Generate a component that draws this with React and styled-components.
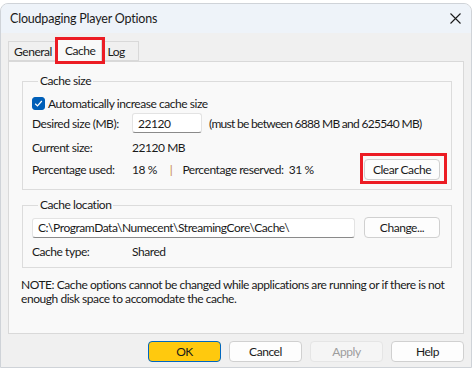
import React, { useState } from "react";
import styled, { createGlobalStyle } from "styled-components";

const GlobalStyle = createGlobalStyle`
  body {
    margin: 0;
    background: #ffffff;
    font-family: Lato, "Noto Sans", sans-serif;
    font-size: 12px;
    letter-spacing: -0.45px;
    color: #1a1a1a;
  }
`;

function App() {
  const [autoGrow, setAutoGrow] = useState(true);
  const [desired, setDesired] = useState("22120");
  const [tab, setTab] = useState("Cache");

  return (
    <>
      <GlobalStyle />
      <Window>
        <TitleBar>
          <Title>Cloudpaging Player Options</Title>
          <CloseIcon width="11" height="11" viewBox="0 0 11 11">
            <path d="M0.5 0.5 L10.5 10.5 M10.5 0.5 L0.5 10.5" stroke="#1a1a1a" strokeWidth="1.1" />
          </CloseIcon>
        </TitleBar>
        <Body>
          <TabStrip>
            {["General", "Cache", "Log"].map((t) => (
              <Tab key={t} $active={tab === t} onClick={() => setTab(t)}>
                {t}
                {t === "Cache" && <Highlight />}
              </Tab>
            ))}
          </TabStrip>
          <Panel>
            <Group>
              <Legend>Cache size</Legend>
              <CheckRow>
                <CheckBox $checked={autoGrow} onClick={() => setAutoGrow(!autoGrow)}>
                  {autoGrow && (
                    <svg width="9" height="9" viewBox="0 0 9 9">
                      <path d="M1.2 4.8 L3.5 7 L7.8 2" fill="none" stroke="#fff" strokeWidth="1.2" />
                    </svg>
                  )}
                </CheckBox>
                Automatically increase cache size
              </CheckRow>
              <FieldRow $top={1}>
                <Label>Desired size (MB):</Label>
                <TextBox $width={70} value={desired} onChange={(e) => setDesired(e.target.value)} />
                <Hint>(must be between 6888 MB and 625540 MB)</Hint>
              </FieldRow>
              <FieldRow $top={5} $height={18}>
                <Label>Current size:</Label>
                <span>22120 MB</span>
              </FieldRow>
              <FieldRow $top={3}>
                <Label>Percentage used:</Label>
                <span>18 %</span>
                <Separator>|</Separator>
                <span>Percentage reserved:&nbsp; 31 %</span>
                <Highlighted>
                  <Button $width={76}>Clear Cache</Button>
                </Highlighted>
              </FieldRow>
            </Group>

            <Group $spaced>
              <Legend>Cache location</Legend>
              <FieldRow $top={0}>
                <TextBox $width={323} readOnly value="C:\ProgramData\Numecent\StreamingCore\Cache\" />
                <Button $width={76} $push>Change...</Button>
              </FieldRow>
              <FieldRow $top={4} $height={18}>
                <Label>Cache type:</Label>
                <span>Shared</span>
              </FieldRow>
            </Group>

            <Note>
              NOTE: Cache options cannot be changed while applications are running or if there is not
              enough disk space to accomodate the cache.
            </Note>
          </Panel>
          <ButtonBar>
            <Button $width={73} $primary>OK</Button>
            <Button $width={73}>Cancel</Button>
            <Button $width={73} disabled>Apply</Button>
            <Button $width={73}>Help</Button>
          </ButtonBar>
        </Body>
      </Window>
    </>
  );
}

export default App;

const Window = styled.div`
  margin-top: 3px;
  width: 470px;
  height: 363px;
  border: 1px solid #cfd3d8;
  border-radius: 8px 8px 0 0;
  background: #f0f0f0;
  overflow: hidden;
  display: flex;
  flex-direction: column;
`;

const TitleBar = styled.div`
  height: 29px;
  background: #eef3f9;
  display: flex;
  align-items: center;
  justify-content: space-between;
  padding: 0 10px 0 9px;
`;

const Title = styled.span`
  font-size: 12.5px;
  letter-spacing: -0.2px;
  color: #1a1a1a;
`;

const CloseIcon = styled.svg`
  display: block;
`;

const Body = styled.div`
  padding: 0 7px 0 7px;
  display: flex;
  flex-direction: column;
`;

const TabStrip = styled.div`
  height: 28px;
  display: flex;
  align-items: flex-end;
`;

const Tab = styled.div`
  position: relative;
  box-sizing: border-box;
  min-width: 38px;
  height: ${(p) => (p.$active ? "25px" : "20px")};
  padding: 0 ${(p) => (p.$active ? "6px 0 7px" : "5px")};
  margin-bottom: ${(p) => (p.$active ? "-1px" : "0")};
  display: flex;
  align-items: center;
  background: ${(p) => (p.$active ? "#f9f9f9" : "#f0f0f0")};
  border: 1px solid #d9d9d9;
  border-bottom: ${(p) => (p.$active ? "none" : "1px solid #d9d9d9")};
  margin-right: -1px;
  z-index: ${(p) => (p.$active ? 2 : 1)};
  cursor: default;
`;

const Highlight = styled.span`
  position: absolute;
  left: -3px;
  right: -4px;
  top: -1px;
  bottom: -2px;
  border: 3px solid #ec1c24;
  pointer-events: none;
`;

const Panel = styled.div`
  height: 260px;
  background: #f9f9f9;
  border: 1px solid #d9d9d9;
  padding: 11px 11px 0 13px;
  display: flex;
  flex-direction: column;
`;

const Group = styled.fieldset`
  margin: ${(p) => (p.$spaced ? "7px" : "0")} 0 0 0;
  padding: 4px 11px ${(p) => (p.$spaced ? "7px" : "9px")} 9px;
  border: 1px solid #dcdcdc;
  min-inline-size: 0;
  display: flex;
  flex-direction: column;
`;

const Legend = styled.legend`
  padding: 0 2px;
  margin-left: 6px;
  line-height: 16px;
`;

const CheckRow = styled.label`
  margin-top: 1px;
  height: 18px;
  display: flex;
  align-items: center;
  gap: 3px;
`;

const CheckBox = styled.span`
  width: 13px;
  height: 13px;
  box-sizing: border-box;
  border-radius: 3px;
  background: ${(p) => (p.$checked ? "#005fb8" : "#ffffff")};
  border: 1px solid ${(p) => (p.$checked ? "#005fb8" : "#8a8a8a")};
  display: flex;
  align-items: center;
  justify-content: center;
`;

const FieldRow = styled.div`
  margin-top: ${(p) => p.$top}px;
  height: ${(p) => (p.$height ? `${p.$height}px` : "auto")};
  display: flex;
  align-items: center;
`;

const Label = styled.span`
  width: 100px;
  flex-shrink: 0;
`;

const TextBox = styled.input`
  width: ${(p) => p.$width}px;
  height: 20px;
  box-sizing: border-box;
  padding: 0 5px;
  font: inherit;
  letter-spacing: inherit;
  color: #1a1a1a;
  background: #ffffff;
  border: 1px solid #e3e3e3;
  border-bottom-color: #8a8a8a;
  border-radius: 3px;
  outline: none;
`;

const Hint = styled.span`
  margin-left: 7px;
  letter-spacing: -0.7px;
`;

const Separator = styled.span`
  color: #c8873a;
  margin: 0 10px 0 13px;
`;

const Highlighted = styled.div`
  position: relative;
  margin-left: auto;
  &::after {
    content: "";
    position: absolute;
    left: -4px;
    right: -7px;
    top: -6px;
    bottom: -4px;
    border: 3px solid #ec1c24;
    pointer-events: none;
  }
`;

const Button = styled.button`
  width: ${(p) => p.$width}px;
  height: 21px;
  margin-left: ${(p) => (p.$push ? "auto" : "0")};
  font: inherit;
  letter-spacing: inherit;
  color: ${(p) => (p.disabled ? "#9d9d9d" : "#1a1a1a")};
  background: ${(p) => (p.$primary ? "#ffc90e" : p.disabled ? "#f5f5f5" : "#fdfdfd")};
  border: 1px solid ${(p) => (p.$primary ? "#0067c0" : p.disabled ? "#e5e5e5" : "#d0d0d0")};
  border-radius: 4px;
  padding: 0;
`;

const Note = styled.p`
  margin: 10px 0 0 -1px;
  line-height: 14px;
`;

const ButtonBar = styled.div`
  margin-top: 7px;
  display: flex;
  justify-content: flex-end;
  gap: 8px;
`;
